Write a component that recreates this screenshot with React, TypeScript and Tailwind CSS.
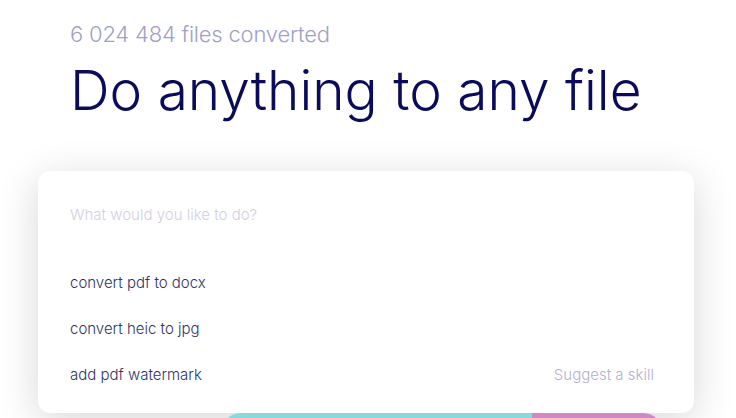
import React from "react";

export default function App() {
  const items = ["convert pdf to docx", "convert heic to jpg", "add pdf watermark"];
  return (
    <div className="relative w-[736px] h-[418px] overflow-hidden bg-white" style={{ fontFamily: "Inter, 'Noto Sans', sans-serif" }}>
      <div className="pl-[70px] pt-[20px]">
        <div className="text-[22px] leading-[28px] font-light text-[#a09fca] tracking-[-0.2px]">6 024 484 files converted</div>
        <h1 className="mt-[10px] text-[55px] leading-[64px] font-light text-[#0b0b5c] tracking-[0px]">Do anything to any file</h1>
      </div>
      <div className="relative ml-[38px] mr-[42px] mt-[49px] h-[242px] rounded-[12px] bg-white shadow-[0_8px_40px_rgba(0,0,0,0.16)] px-[32px]">
        <div className="pt-[34px] text-[15px] leading-[20px] font-light text-[#d2cfe5]">What would you like to do?</div>
        <div className="mt-[48px] flex flex-col gap-[26px]">
          {items.map((t, i) => (
            <div key={t} className="flex items-center justify-between h-[20px]">
              <span className="text-[15px] font-light text-[#33325e]">{t}</span>
              {i === 2 && <span className="mr-[8px] text-[15px] font-light text-[#b2b0d2]">Suggest a skill</span>}
            </div>
          ))}
        </div>
      </div>
      <div className="absolute left-[221px] top-[413px] w-[320px] h-[60px] rounded-tl-[20px] bg-[#88d9db]" />
      <div className="absolute left-[532px] top-[413px] w-[131px] h-[60px] rounded-tr-[20px] bg-[#cf8ac3]" />
    </div>
  );
}
